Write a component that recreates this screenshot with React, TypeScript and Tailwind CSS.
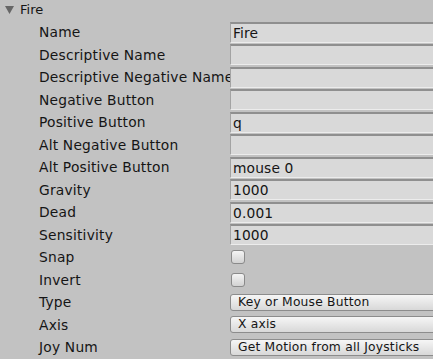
import React from "react";

type Row =
  | { label: string; kind: "text"; value: string }
  | { label: string; kind: "check" }
  | { label: string; kind: "drop"; value: string };

const rows: Row[] = [
  { label: "Name", kind: "text", value: "Fire" },
  { label: "Descriptive Name", kind: "text", value: "" },
  { label: "Descriptive Negative Name", kind: "text", value: "" },
  { label: "Negative Button", kind: "text", value: "" },
  { label: "Positive Button", kind: "text", value: "q" },
  { label: "Alt Negative Button", kind: "text", value: "" },
  { label: "Alt Positive Button", kind: "text", value: "mouse 0" },
  { label: "Gravity", kind: "text", value: "1000" },
  { label: "Dead", kind: "text", value: "0.001" },
  { label: "Sensitivity", kind: "text", value: "1000" },
  { label: "Snap", kind: "check" },
  { label: "Invert", kind: "check" },
  { label: "Type", kind: "drop", value: "Key or Mouse Button" },
  { label: "Axis", kind: "drop", value: "X axis" },
  { label: "Joy Num", kind: "drop", value: "Get Motion from all Joysticks" },
];

function Control({ row }: { row: Row }) {
  if (row.kind === "text") {
    return (
      <div className="h-[21px] w-[205px] shrink-0 bg-[#d9d9d9] border-t-2 border-t-[#8f8f8f] border-l border-l-[#a3a3a3] border-b border-b-[#ececec] flex items-center pl-[2px] text-[13.8px] tracking-[0.15px] text-[#151515] leading-[18px]">
        {row.value}
      </div>
    );
  }
  if (row.kind === "check") {
    return (
      <div className="ml-[1px] h-[14px] w-[14px] rounded-[3px] border border-[#8a8a8a] bg-gradient-to-b from-[#f4f4f4] to-[#d2d2d2]" />
    );
  }
  return (
    <div className="h-[17px] w-[205px] shrink-0 rounded-l-[3px] border border-[#8c8c8c] bg-gradient-to-b from-[#f6f6f6] to-[#d8d8d8] flex items-center pl-[7px] text-[12.3px] tracking-[0.2px] text-[#151515] leading-[15px]">
      {row.value}
    </div>
  );
}

export default function App() {
  return (
    <div
      className="w-[433px] h-[359px] bg-[#c2c2c2] overflow-hidden"
      style={{ fontFamily: '"DejaVu Sans", sans-serif' }}
    >
      <div className="h-[20.75px] flex items-center pl-[5px]">
        <svg width="9" height="8" viewBox="0 0 9 8" className="mr-[6px]">
          <polygon points="0,0 9,0 4.5,8" fill="#666666" />
        </svg>
        <span className="text-[13px] text-[#151515] leading-[18px]">Fire</span>
      </div>
      {rows.map((r) => (
        <div key={r.label} className="h-[22.5px] flex items-center">
          <div className="w-[230px] shrink-0 pl-[39px] pr-[1px] overflow-hidden whitespace-nowrap text-[13.8px] tracking-[0.2px] text-[#151515] leading-[20px]">
            {r.label}
          </div>
          <Control row={r} />
        </div>
      ))}
    </div>
  );
}
